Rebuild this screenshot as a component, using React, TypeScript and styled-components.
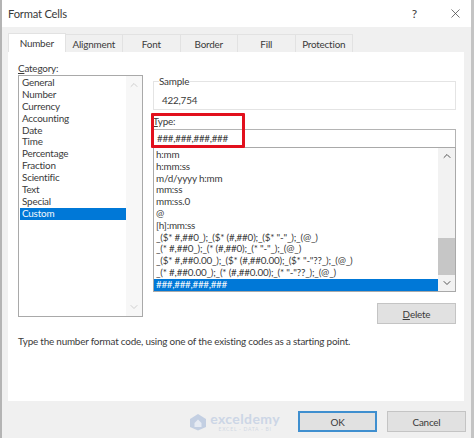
import { ChevronDown, ChevronUp, X } from 'lucide-react';
import styled, { createGlobalStyle } from 'styled-components';

const GlobalStyle = createGlobalStyle`
  html, body {
    margin: 0;
    padding: 0;
    background: #f0f0f0;
  }
  * {
    box-sizing: border-box;
  }
`;

const tabs = ['Number', 'Alignment', 'Font', 'Border', 'Fill', 'Protection'];
const categories = [
  'General', 'Number', 'Currency', 'Accounting', 'Date', 'Time',
  'Percentage', 'Fraction', 'Scientific', 'Text', 'Special', 'Custom',
];
const formats = [
  'h:mm',
  'h:mm:ss',
  'm/d/yyyy h:mm',
  'mm:ss',
  'mm:ss.0',
  '@',
  '[h]:mm:ss',
  '_($* #,##0_);_($* (#,##0);_($* "-"_);_(@_)',
  '_(* #,##0_);_(* (#,##0);_(* "-"_);_(@_)',
  '_($* #,##0.00_);_($* (#,##0.00);_($* "-"??_);_(@_)',
  '_(* #,##0.00_);_(* (#,##0.00);_(* "-"??_);_(@_)',
  '###,###,###,###',
];

export default function App() {
  return (
    <>
      <GlobalStyle />
      <Dialog>
        <TitleBar>
          <Title>Format Cells</Title>
          <HelpMark>?</HelpMark>
          <CloseIcon size={15} strokeWidth={1.2} />
        </TitleBar>

        <Tabs>
          {tabs.map((tab) => (
            <Tab key={tab} $active={tab === 'Number'}>{tab}</Tab>
          ))}
        </Tabs>

        <Panel>
          <Columns>
            <LeftColumn>
              <FieldLabel><u>C</u>ategory:</FieldLabel>
              <CategoryBox>
                <CategoryRows>
                  {categories.map((name) => (
                    <CategoryRow key={name} $selected={name === 'Custom'}>{name}</CategoryRow>
                  ))}
                </CategoryRows>
                <GhostScroll>
                  <ChevronUp size={12} strokeWidth={1.6} />
                  <ChevronDown size={12} strokeWidth={1.6} />
                </GhostScroll>
              </CategoryBox>
            </LeftColumn>

            <RightColumn>
              <SampleBox>
                <SampleLegend>Sample</SampleLegend>
                <SampleValue>422,754</SampleValue>
              </SampleBox>

              <TypeLabel><u>T</u>ype:</TypeLabel>
              <TypeInput>###,###,###,###</TypeInput>
              <RedMark />

              <FormatBox>
                <FormatRows>
                  {formats.map((code) => (
                    <FormatRow key={code} $selected={code.startsWith('###')}>{code}</FormatRow>
                  ))}
                </FormatRows>
                <Scrollbar>
                  <ChevronUp size={12} strokeWidth={2} />
                  <ScrollTrack>
                    <ScrollThumb />
                  </ScrollTrack>
                  <ChevronDown size={12} strokeWidth={2} />
                </Scrollbar>
              </FormatBox>

              <DeleteRow>
                <DeleteButton><u>D</u>elete</DeleteButton>
              </DeleteRow>
            </RightColumn>
          </Columns>

          <Description>
            Type the number format code, using one of the existing codes as a starting point.
          </Description>
        </Panel>

        <Footer>
          <Watermark>
            <svg width="18" height="18" viewBox="0 0 18 18">
              <path d="M9 1 L17 6 V14 L9 17.500 L1 14 V6 Z" fill="#c3cfe2" />
              <path d="M5.500 10 L9 6.500 L12.500 10 V14 H5.500 Z" fill="#e6ebf3" />
            </svg>
            <WatermarkText>
              <WatermarkName>exceldemy</WatermarkName>
              <WatermarkTag>EXCEL · DATA · BI</WatermarkTag>
            </WatermarkText>
          </Watermark>
          <OkButton>OK</OkButton>
          <FooterButton>Cancel</FooterButton>
        </Footer>
      </Dialog>
    </>
  );
}

const Dialog = styled.div`
  position: relative;
  width: 474px;
  height: 438px;
  display: flex;
  flex-direction: column;
  background: #f0f0f0;
  border-left: 2px solid #b4b4b4;
  border-right: 3px solid #c4c4c4;
  font-family: "Lato", "Noto Sans", sans-serif;
  font-size: 9.900px;
  letter-spacing: -0.2px;
  color: #3a3a3a;
  overflow: hidden;

  u {
    text-underline-offset: 1px;
  }
`;

const TitleBar = styled.div`
  height: 27px;
  flex: none;
  display: flex;
  align-items: center;
  padding: 0 8px 0 6px;
  background: #fff;
`;

const Title = styled.div`
  flex: 1;
  font-size: 11.200px;
`;

const HelpMark = styled.div`
  font-size: 12px;
  margin-right: 31px;
`;

const CloseIcon = styled(X)`
  color: #444;
`;

const Tabs = styled.div`
  display: flex;
  flex: none;
  height: 25px;
  padding: 7px 0 0 6px;
`;

const Tab = styled.div<{ $active?: boolean }>`
  width: 57.500px;
  display: flex;
  align-items: center;
  justify-content: center;
  background: ${(p) => (p.$active ? '#fff' : '#f0f0f0')};
  border: 1px solid #e2e2e2;
  border-left-width: ${(p) => (p.$active ? '1px' : '0')};
  border-bottom: none;
  margin-top: ${(p) => (p.$active ? '-1px' : '0')};
`;

const Panel = styled.div`
  flex: none;
  width: 456px;
  height: 349px;
  margin-left: 6px;
  background: #fff;
  padding: 10px 8px 0 10px;
`;

const Columns = styled.div`
  display: flex;
  gap: 10px;
`;

const LeftColumn = styled.div`
  width: 125px;
  flex: none;
`;

const FieldLabel = styled.div`
  height: 13px;
  line-height: 13px;
`;

const CategoryBox = styled.div`
  display: flex;
  height: 242px;
  border: 1px solid #a9a9a9;
`;

const CategoryRows = styled.div`
  flex: 1;
  padding: 1px 0 0 1px;
`;

const CategoryRow = styled.div<{ $selected?: boolean }>`
  height: 11.900px;
  line-height: 11.900px;
  padding-left: 2px;
  background: ${(p) => (p.$selected ? '#0078d7' : 'transparent')};
  color: ${(p) => (p.$selected ? '#f4f8fc' : 'inherit')};
`;

const GhostScroll = styled.div`
  width: 16px;
  display: flex;
  flex-direction: column;
  justify-content: space-between;
  align-items: center;
  padding: 3px 0;
  background: #f7f7f7;
  color: #c4c4c4;
`;

const RightColumn = styled.div`
  position: relative;
  width: 303px;
  flex: none;
  padding-top: 14px;
`;

const SampleBox = styled.fieldset`
  height: 34px;
  margin: 0;
  padding: 0 0 0 8px;
  border: 1px solid #e4e4e4;
`;

const SampleLegend = styled.legend`
  padding: 0 1px 0 0;
  margin-left: -3px;
  line-height: 10px;
`;

const SampleValue = styled.div`
  line-height: 12px;
  margin-top: 8px;
`;

const TypeLabel = styled.div`
  height: 19px;
  line-height: 14px;
  padding-top: 4px;
`;

const TypeInput = styled.div`
  height: 19px;
  line-height: 17px;
  padding-left: 3px;
  border: 1px solid #b4b4b4;
  border-bottom-color: #8c8c8c;
  letter-spacing: -0.3px;
`;

const RedMark = styled.div`
  position: absolute;
  left: -2px;
  top: 51px;
  width: 94px;
  height: 35px;
  border: 3px solid #e2101d;
  border-radius: 1px;
`;

const FormatBox = styled.div`
  display: flex;
  height: 145px;
  margin-top: -1px;
  border: 1px solid #a9a9a9;
`;

const FormatRows = styled.div`
  flex: 1;
  overflow: hidden;
`;

const FormatRow = styled.div<{ $selected?: boolean }>`
  height: 11.800px;
  line-height: 11.800px;
  padding-left: 2px;
  white-space: nowrap;
  letter-spacing: ${(p) => (p.$selected ? '-0.3px' : '-0.2px')};
  background: ${(p) => (p.$selected ? '#0078d7' : 'transparent')};
  color: ${(p) => (p.$selected ? '#f4f8fc' : 'inherit')};

  &:first-child {
    margin-top: 1px;
  }
`;

const Scrollbar = styled.div`
  width: 17px;
  display: flex;
  flex-direction: column;
  align-items: center;
  padding: 2px 0;
  background: #f2f2f2;
  color: #555;
`;

const ScrollTrack = styled.div`
  flex: 1;
  width: 100%;
  display: flex;
  flex-direction: column;
  justify-content: flex-end;
  padding-bottom: 2px;
`;

const ScrollThumb = styled.div`
  height: 37px;
  background: #c6c6c6;
`;

const DeleteRow = styled.div`
  display: flex;
  justify-content: flex-end;
  margin-top: 11px;
`;

const FooterButton = styled.div`
  width: 79px;
  height: 21px;
  display: flex;
  align-items: center;
  justify-content: center;
  background: #e1e1e1;
  border: 1px solid #c4c4c4;
`;

const DeleteButton = styled(FooterButton)``;

const OkButton = styled(FooterButton)`
  border: 2px solid #3f8fcf;
`;

const Description = styled.div`
  margin-top: 10px;
  line-height: 14px;
  white-space: nowrap;
`;

const Footer = styled.div`
  flex: none;
  display: flex;
  align-items: center;
  gap: 10px;
  padding: 10px 5px 0 0;
  justify-content: flex-end;
`;

const Watermark = styled.div`
  display: flex;
  align-items: center;
  gap: 3px;
  margin-right: 8px;
`;

const WatermarkText = styled.div`
  display: flex;
  flex-direction: column;
  align-items: center;
`;

const WatermarkName = styled.div`
  font-size: 14px;
  line-height: 14px;
  font-weight: 700;
  letter-spacing: 0.4px;
  color: #ccd6e6;
`;

const WatermarkTag = styled.div`
  font-size: 5px;
  line-height: 6px;
  letter-spacing: 0.8px;
  color: #d2d9e4;
`;
